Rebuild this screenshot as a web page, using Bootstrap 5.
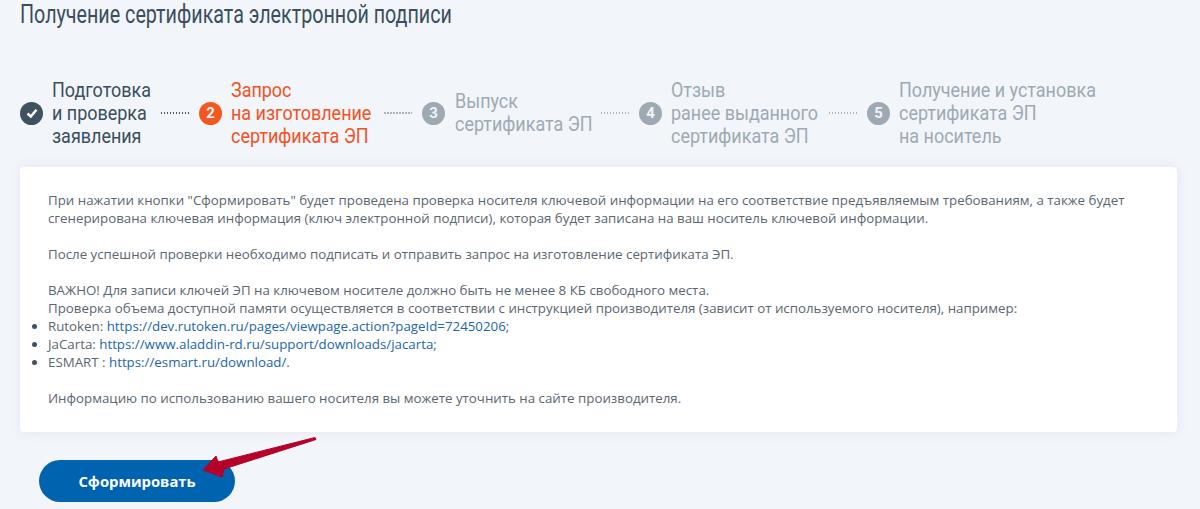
<!DOCTYPE html>
<html lang="ru"><head><meta charset="utf-8"><title>ЭП</title>
<link href="https://cdn.jsdelivr.net/npm/bootstrap@5.3.0/dist/css/bootstrap.min.css" rel="stylesheet">
<style>
html,body{height:509px;overflow:hidden}
body{background:#f2f5fa;font-family:"Open Sans",sans-serif;font-size:13.3px;line-height:18px;color:#5a6670}
.page{position:relative;padding:0 23px 0 20px}
.ptitle{font-family:Roboto,sans-serif;font-weight:400;font-size:25px;line-height:30px;color:#3a4e5d;margin:0;height:70px;white-space:nowrap;transform:scaleX(.788);transform-origin:left top}
.steps{height:86px;margin-bottom:11px;font-family:Roboto,sans-serif;font-size:21px;line-height:23px;color:#9eaab3;white-space:nowrap}
.stepnum{width:23px;height:23px;border-radius:50%;background:#9eaab3;color:#f1f4fa;font-size:15px;font-weight:700;flex:none;display:flex;align-items:center;justify-content:center;margin-right:9px}
.lbl{display:block;flex:none}
.lbl>span{display:block;transform:scaleX(.855);transform-origin:left center}
.l1{width:99px}.l2{width:143px}.l3{width:136px;margin-left:1px}.l4{width:148px}.l5{width:197px}
.st-done{color:#3a4e5d}.st-done .stepnum{background:#3f5260}
.st-cur{color:#f4511e}.st-cur .stepnum{background:#f4581e}
.dots{width:28px;height:2px;margin:0 10px;flex:none;background:repeating-linear-gradient(90deg,#a9b4bc 0 1.5px,transparent 1.5px 3px)}
.dots.dk{background:repeating-linear-gradient(90deg,#46586a 0 1.5px,transparent 1.5px 3px)}
.panel{background:#fff;border-radius:4px;box-shadow:0 0 12px rgba(120,140,170,.12);padding:24px 28px 22px;height:265px}
.panel a{color:#1c66ad;text-decoration:none}
.panel ul{margin:0 0 0 -28px;padding-left:28px}
.panel li::marker{color:#3f5260}
.act{background:#0063b0;color:#fff;border:0;border-radius:21px;width:196px;height:42px;font-weight:700;font-size:14.8px;margin:28px 0 0 19px}
.act:hover{background:#0063b0;color:#fff}
.arrow{position:absolute;left:195px;top:430px}
</style></head><body>
<div class="page">
<h1 class="ptitle">Получение сертификата электронной подписи</h1>
<div class="steps d-flex align-items-center">
<div class="d-flex align-items-center st-done"><span class="stepnum"><svg width="14" height="14" viewBox="0 0 14 14"><path d="M2.500 7.500 5.800 10.500 11.500 3.800" fill="none" stroke="#fff" stroke-width="2.500"/></svg></span><span class="lbl l1"><span>Подготовка<br>и проверка<br>заявления</span></span></div>
<div class="dots dk"></div>
<div class="d-flex align-items-center st-cur"><span class="stepnum">2</span><span class="lbl l2"><span>Запрос<br>на изготовление<br>сертификата ЭП</span></span></div>
<div class="dots"></div>
<div class="d-flex align-items-center"><span class="stepnum">3</span><span class="lbl l3"><span>Выпуск<br>сертификата ЭП</span></span></div>
<div class="dots"></div>
<div class="d-flex align-items-center"><span class="stepnum">4</span><span class="lbl l4"><span>Отзыв<br>ранее выданного<br>сертификата ЭП</span></span></div>
<div class="dots"></div>
<div class="d-flex align-items-center"><span class="stepnum">5</span><span class="lbl l5"><span>Получение и установка<br>сертификата ЭП<br>на носитель</span></span></div>
</div>
<div class="panel">
При нажатии кнопки "Сформировать" будет проведена проверка носителя ключевой информации на его соответствие предъявляемым требованиям, а также будет сгенерирована ключевая информация (ключ электронной подписи), которая будет записана на ваш носитель ключевой информации.<br><br>
После успешной проверки необходимо подписать и отправить запрос на изготовление сертификата ЭП.<br><br>
ВАЖНО! Для записи ключей ЭП на ключевом носителе должно быть не менее 8 КБ свободного места.<br>
Проверка объема доступной памяти осуществляется в соответствии с инструкцией производителя (зависит от используемого носителя), например:
<ul>
<li>Rutoken: <a href="#">https://dev.rutoken.ru/pages/viewpage.action?pageId=72450206</a>;</li>
<li>JaCarta: <a href="#">https://www.aladdin-rd.ru/support/downloads/jacarta</a>;</li>
<li>ESMART : <a href="#">https://esmart.ru/download/</a>.</li>
</ul><br>
Информацию по использованию вашего носителя вы можете уточнить на сайте производителя.
</div>
<button class="btn act" type="button">Сформировать</button>
<svg class="arrow" width="125" height="50" viewBox="0 0 125 50"><path d="M120 7.500 121 9.500 29 39 27 47 8 40 21 26 23 32Z" fill="#b5002a" stroke="#b5002a" stroke-linejoin="round"/></svg>
</div>
</body></html>
